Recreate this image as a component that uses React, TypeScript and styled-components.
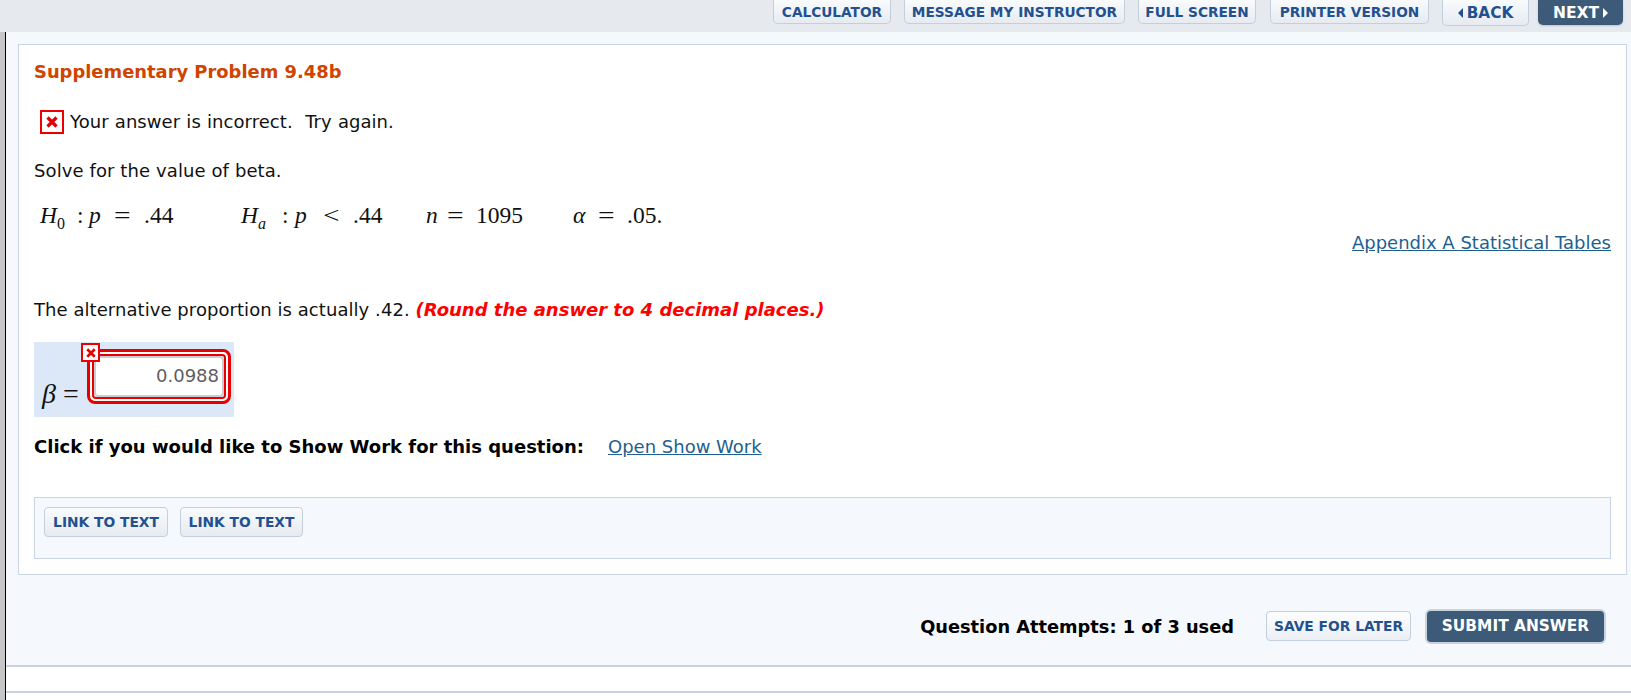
import React from "react";
import styled, { createGlobalStyle, css } from "styled-components";

const Global = createGlobalStyle`
  html, body { margin: 0; padding: 0; background: #fff; }
  body { font-family: "DejaVu Sans", Verdana, sans-serif; font-size: 18px; color: #111; overflow: hidden; }
`;

const Page = styled.div`height: 700px; display: flex; flex-direction: column;`;

const TopBar = styled.div`
  height: 32px; background: #e6eaee; display: flex; justify-content: flex-end;
  align-items: flex-start; padding-right: 8px; box-sizing: border-box;
`;

const Chrome = styled.div`
  flex: 1; border-left: 5px solid #c6c6c6; display: flex; flex-direction: column;
`;
const Inner = styled.div`flex: 1; border-left: 1px solid #000; display: flex; flex-direction: column;`;

const Panel = styled.div`
  background: #f5f8fc; height: 635px; box-sizing: border-box; padding: 12px 4px 0 12px;
  border-bottom: 2px solid #c9d3e0; display: flex; flex-direction: column;
`;

const Card = styled.div`
  background: #fff; border: 1px solid #c9d5e5; height: 531px; box-sizing: border-box;
  padding: 17px 15px 0 15px; display: flex; flex-direction: column;
`;

const Title = styled.h2`
  margin: 0; font-size: 17.9px; line-height: 20px; font-weight: 700; color: #d04400;
`;

const Feedback = styled.div`
  margin: 28px 0 0 6px; display: flex; align-items: center; gap: 6px; height: 24px; line-height: 24px;
  white-space: pre; word-spacing: 0.5px; letter-spacing: 0.04px;
`;

const ErrorMark = styled.span<{ $size: number; $border: number }>`
  width: ${(p) => p.$size}px; height: ${(p) => p.$size}px; box-sizing: border-box;
  border: ${(p) => p.$border}px solid #ee0000; background: #fff; display: flex;
  align-items: center; justify-content: center; flex: none;
`;

const Line = styled.p`margin: 27px 0 0; line-height: 20px; white-space: pre; letter-spacing: 0.1px;`;

const Equation = styled.div`
  margin-top: 22px; margin-left: 6px; height: 30px; display: flex; align-items: baseline;
  font-family: "Liberation Serif", "Times New Roman", serif; font-size: 23.5px; line-height: 25px; color: #111; white-space: pre;
`;
const Term = styled.span<{ $width: number }>`width: ${(p) => p.$width}px; flex: none;`;
const Operator = styled.span<{ $width: number }>`
  width: ${(p) => p.$width}px; flex: none; display: inline-block; transform: scaleX(1.25); transform-origin: left;
`;
const Var = styled.i``;
const Sub = styled.sub<{ $italic?: boolean }>`
  font-size: 16px; line-height: 0; font-style: ${(p) => (p.$italic ? "italic" : "normal")};
`;

const AppendixRow = styled.div`height: 20px; display: flex; justify-content: flex-end;`;

const TextLink = styled.a`
  color: #1f5f8f; text-decoration: underline; line-height: 20px; cursor: pointer;
`;

const AltLine = styled.p`margin: 47px 0 0; line-height: 20px; white-space: pre; letter-spacing: 0.06px;`;
const RoundNote = styled.strong`color: #f00; font-style: italic; letter-spacing: 0;`;

const AnswerBlock = styled.div`
  margin-top: 22px; width: 200px; height: 75px; background: #dce8f8; position: relative;
  display: flex; align-items: flex-end; box-sizing: border-box; padding: 0 4px 14px 8px;
`;
const Beta = styled.span`
  font-family: "Liberation Serif", serif; font-size: 28px; line-height: 28px; width: 45px; flex: none; white-space: pre;
  display: flex; gap: 7px; transform: translateY(5px);
`;
const Ring = styled.div`
  width: 144px; height: 55px; box-sizing: border-box; border: 3px solid #e60000; border-radius: 8px;
  background: #fff; padding: 2px; margin-bottom: -1px; flex: none;
`;
const InnerRing = styled.div`
  height: 100%; box-sizing: border-box; border: 2px solid #e60000; border-radius: 4px; background: #fff;
`;
const InputBox = styled.div`
  height: 100%; box-sizing: border-box; border: 2px solid #c9ccd4; border-radius: 4px; background: #fff;
  text-align: right; padding: 0 3px 2px 0; color: #5f5f5f; line-height: 20px; display: flex;
  align-items: center; justify-content: flex-end;
`;
const MiniMark = styled.div`position: absolute; left: 47px; top: 1px;`;

const ShowWork = styled.div`
  margin-top: 20px; line-height: 20px; display: flex; gap: 24px; white-space: pre;
`;
const Strong = styled.strong`font-weight: 700; color: #000;`;

const LinkPanel = styled.div`
  margin-top: 40px; height: 62px; box-sizing: border-box; background: #f5f8fc; border: 1px solid #c9d5e5;
  padding: 9px; display: flex; align-items: flex-start; gap: 12px;
`;

const lightButton = css`
  box-sizing: border-box; display: flex; align-items: center; justify-content: center; flex: none;
  border: 1px solid #c4cfdc; border-radius: 4px; color: #23508f; font-weight: 700;
  background: linear-gradient(#f9fbfd, #e6ebf1); white-space: pre; font-family: "DejaVu Sans", sans-serif;
`;

const LinkButton = styled.button<{ $width: number }>`
  ${lightButton}; width: ${(p) => p.$width}px; height: 30px; padding: 0; font-size: 13.8px;
`;

const ToolButton = styled.button<{ $width: number; $gap: number; $height?: number; $size?: number }>`
  ${lightButton}; width: ${(p) => p.$width}px; height: ${(p) => p.$height ?? 24}px; margin-right: ${(p) => p.$gap}px;
  padding: 0; font-size: ${(p) => p.$size ?? 13.7}px; border-top: none; border-radius: 0 0 5px 5px; gap: 4px;
`;

const NextButton = styled.button`
  width: 85px; height: 25px; box-sizing: border-box; flex: none; display: flex; align-items: center; justify-content: center;
  gap: 4px; border: none; border-radius: 0 0 5px 5px; background: #3d5a78; color: #fff; font-weight: 700; font-size: 15.5px;
  padding: 0; box-shadow: 0 1px 2px #b7c2cf; font-family: "DejaVu Sans", sans-serif;
`;

const Footer = styled.div`
  flex: 1; display: flex; align-items: center; justify-content: flex-end; padding: 12px 23px 0 0;
`;
const Attempts = styled.strong`font-size: 17.8px; color: #000; margin-right: 32px; white-space: pre;`;
const SaveButton = styled.button`
  ${lightButton}; width: 145px; height: 30px; padding: 0; font-size: 13.8px; background: linear-gradient(#fcfdfe, #ebeff4);
  margin-right: 16px;
`;
const SubmitButton = styled.button`
  width: 177px; height: 31px; box-sizing: border-box; border: none; border-radius: 4px; background: #3d5a78;
  color: #fff; font-weight: 700; font-size: 15.4px; padding: 0; box-shadow: 0 0 0 2px #c9d2dd; font-family: "DejaVu Sans", sans-serif;
`;

const Gap = styled.div`height: 24px; border-bottom: 2px solid #c9d3e0; box-sizing: content-box;`;

const Cross = ({ size }: { size: number }) => (
  <svg width={size} height={size} viewBox="0 0 12 12">
    <path d="M1.5 1.5 L10.5 10.5 M10.5 1.5 L1.5 10.5" stroke="#e60000" strokeWidth="3.2" fill="none" />
  </svg>
);

const Arrow = ({ dir, color }: { dir: "l" | "r"; color: string }) => (
  <svg width="5" height="10" viewBox="0 0 5 10">
    <path d={dir === "l" ? "M5 0 L0 5 L5 10 Z" : "M0 0 L5 5 L0 10 Z"} fill={color} />
  </svg>
);

export default function App() {
  return (
    <Page>
      <Global />
      <TopBar>
        <ToolButton $width={118} $gap={13}>CALCULATOR</ToolButton>
        <ToolButton $width={221} $gap={13}>MESSAGE MY INSTRUCTOR</ToolButton>
        <ToolButton $width={118} $gap={14}>FULL SCREEN</ToolButton>
        <ToolButton $width={159} $gap={13}>PRINTER VERSION</ToolButton>
        <ToolButton $width={87} $gap={9} $height={26} $size={15.3}><Arrow dir="l" color="#23508f" />BACK</ToolButton>
        <NextButton>NEXT<Arrow dir="r" color="#fff" /></NextButton>
      </TopBar>
      <Chrome>
        <Inner>
          <Panel>
            <Card>
              <Title>Supplementary Problem 9.48b</Title>
              <Feedback>
                <ErrorMark $size={24} $border={2}><Cross size={12} /></ErrorMark>
                Your answer is incorrect.  Try again.
              </Feedback>
              <Line>Solve for the value of beta.</Line>
              <Equation>
                <Term $width={37}><Var>H</Var><Sub>0</Sub></Term>
                <Term $width={12}>:</Term>
                <Term $width={25}><Var>p</Var></Term>
                <Operator $width={30}>=</Operator>
                <Term $width={97}>.44</Term>
                <Term $width={41}><Var>H</Var><Sub $italic>a</Sub></Term>
                <Term $width={13}>:</Term>
                <Term $width={28}><Var>p</Var></Term>
                <Operator $width={30}>&lt;</Operator>
                <Term $width={73}>.44</Term>
                <Term $width={21}><Var>n</Var></Term>
                <Operator $width={29}>=</Operator>
                <Term $width={97}>1095</Term>
                <Term $width={25}><Var>α</Var></Term>
                <Operator $width={29}>=</Operator>
                <Term $width={40}>.05.</Term>
              </Equation>
              <AppendixRow><TextLink>Appendix A Statistical Tables</TextLink></AppendixRow>
              <AltLine>The alternative proportion is actually .42. <RoundNote>(Round the answer to 4 decimal places.)</RoundNote></AltLine>
              <AnswerBlock>
                <Beta><Var>β</Var><span>=</span></Beta>
                <Ring><InnerRing><InputBox>0.0988</InputBox></InnerRing></Ring>
                <MiniMark><ErrorMark $size={19} $border={2}><Cross size={10} /></ErrorMark></MiniMark>
              </AnswerBlock>
              <ShowWork>
                <Strong>Click if you would like to Show Work for this question:</Strong>
                <TextLink>Open Show Work</TextLink>
              </ShowWork>
              <LinkPanel>
                <LinkButton $width={124}>LINK TO TEXT</LinkButton>
                <LinkButton $width={123}>LINK TO TEXT</LinkButton>
              </LinkPanel>
            </Card>
            <Footer>
              <Attempts>Question Attempts: 1 of 3 used</Attempts>
              <SaveButton>SAVE FOR LATER</SaveButton>
              <SubmitButton>SUBMIT ANSWER</SubmitButton>
            </Footer>
          </Panel>
          <Gap />
        </Inner>
      </Chrome>
    </Page>
  );
}
